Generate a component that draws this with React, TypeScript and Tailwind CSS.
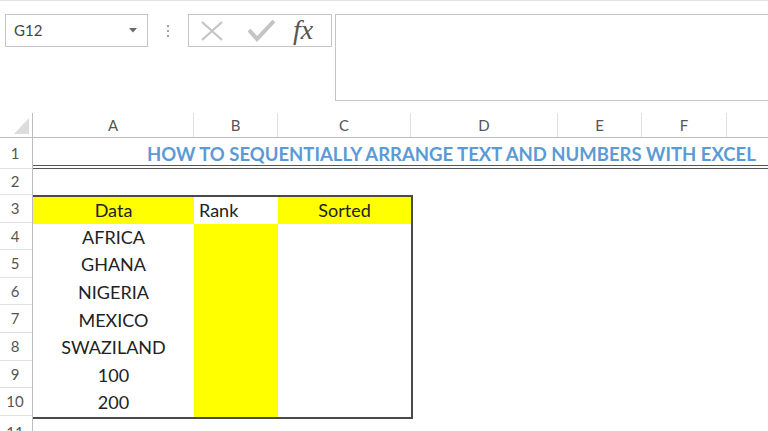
import React from 'react';

const font = { fontFamily: 'Lato, "Open Sans", sans-serif' };

const columns = [
  { label: 'A', w: 'w-[161px]' },
  { label: 'B', w: 'w-[84px]' },
  { label: 'C', w: 'w-[133px]' },
  { label: 'D', w: 'w-[147px]' },
  { label: 'E', w: 'w-[84px]' },
  { label: 'F', w: 'w-[85px]' },
];

const data = ['AFRICA', 'GHANA', 'NIGERIA', 'MEXICO', 'SWAZILAND', '100', '200'];

function FormulaBar() {
  return (
    <div className="flex h-[113px] items-start border-t border-[#e3e3e3] pt-[13px]">
      <div className="ml-[5px] flex h-[33px] w-[143px] items-center justify-between border border-[#c6c6c6] pl-[8px] pr-[10px] text-[15px] text-[#444]">
        <span>G12</span>
        <svg width="8" height="5" viewBox="0 0 8 5">
          <path d="M0 0 L8 0 L4 4.5 Z" fill="#6b6b6b" />
        </svg>
      </div>
      <div className="flex w-[40px] flex-col items-center gap-[3px] pt-[11px]">
        <span className="h-[2px] w-[2px] bg-[#a0a0a0]" />
        <span className="h-[2px] w-[2px] bg-[#a0a0a0]" />
        <span className="h-[2px] w-[2px] bg-[#a0a0a0]" />
      </div>
      <div className="flex h-[33px] w-[144px] items-center border border-[#c6c6c6]">
        <svg className="ml-[11px]" width="24" height="22" viewBox="0 0 24 22">
          <path d="M2 2 L22 20 M22 2 L2 20" stroke="#c4c4c4" strokeWidth="2.2" fill="none" />
        </svg>
        <svg className="ml-[24px]" width="27" height="22" viewBox="0 0 27 22">
          <path d="M1 10 L9 19 L26 1" stroke="#c4c4c4" strokeWidth="4" fill="none" strokeLinejoin="miter" />
        </svg>
        <span
          className="ml-[18px] -mt-[2px] text-[28px] leading-none text-[#555] italic"
          style={{ fontFamily: '"Liberation Serif", "DejaVu Serif", serif' }}
        >
          fx
        </span>
      </div>
      <div className="ml-[3px] h-[87px] flex-1 border-t border-b border-l border-[#c6c6c6]" />
    </div>
  );
}

function ColumnHeader() {
  return (
    <div className="flex h-[25px] border-b border-[#bdbdbd] text-[15px] text-[#555]">
      <div className="flex w-[33px] shrink-0 items-end justify-end border-r border-[#bdbdbd] pb-[3px] pr-[3px]">
        <svg width="15" height="16" viewBox="0 0 15 16">
          <path d="M15 0 L15 16 L0 16 Z" fill="#dcdcdc" />
        </svg>
      </div>
      {columns.map((c) => (
        <div key={c.label} className={`${c.w} flex shrink-0 items-center justify-center border-r border-[#e1e1e1]`}>
          {c.label}
        </div>
      ))}
      <div className="flex-1" />
    </div>
  );
}

function RowHeaders() {
  const rows = [
    { n: '1', h: 'h-[31px]' },
    { n: '2', h: 'h-[26px]' },
    ...[3, 4, 5, 6, 7, 8, 9, 10].map((n) => ({ n: String(n), h: 'h-[27.6px]' })),
  ];
  return (
    <div className="w-[33px] shrink-0 border-r border-[#bdbdbd] text-[15px] text-[#555]">
      {rows.map((r) => (
        <div key={r.n} className={`${r.h} flex items-center justify-center border-b border-[#e1e1e1] pr-[2px]`}>
          {r.n}
        </div>
      ))}
      <div className="flex h-[20px] items-start justify-center pt-[9px] pr-[2px] leading-none">11</div>
    </div>
  );
}

export default function App() {
  return (
    <div className="h-[431px] w-[768px] overflow-hidden bg-white" style={font}>
      <FormulaBar />
      <ColumnHeader />
      <div className="flex">
        <RowHeaders />
        <div className="flex-1 text-[18px] text-[#222]">
          <div className="flex h-[31px] items-start border-b-4 border-double border-[#555] pl-[114px] pt-[3px] text-[18.5px] font-bold whitespace-nowrap text-[#5b9bd5]">
            HOW TO SEQUENTIALLY ARRANGE TEXT AND NUMBERS WITH EXCEL
          </div>
          <div className="h-[26px]" />
          <div className="w-[380px] border-t-2 border-r-2 border-b-2 border-[#4a4a4a]">
            <div className="flex h-[26.6px]">
              <div className="flex w-[161px] items-center justify-center bg-[#ffff00]">Data</div>
              <div className="flex w-[84px] items-center pl-[5px]">Rank</div>
              <div className="flex flex-1 items-center justify-center bg-[#ffff00]">Sorted</div>
            </div>
            {data.map((d) => (
              <div key={d} className="flex h-[27.6px]">
                <div className="flex w-[161px] items-center justify-center">{d}</div>
                <div className="w-[84px] bg-[#ffff00]" />
                <div className="flex-1" />
              </div>
            ))}
          </div>
        </div>
      </div>
    </div>
  );
}
